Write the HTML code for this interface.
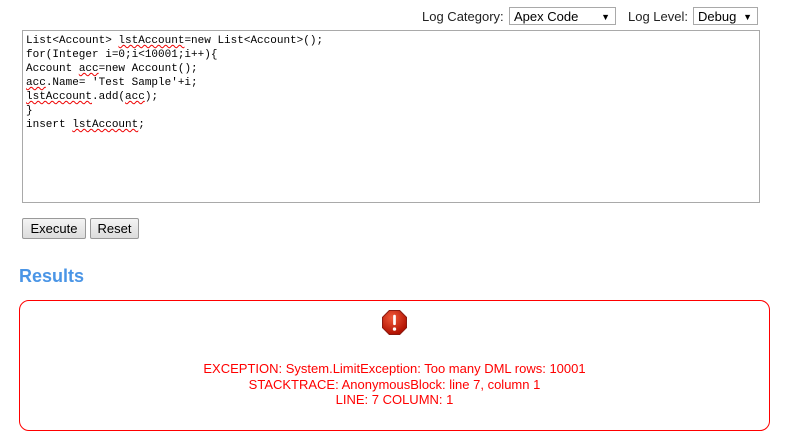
<!DOCTYPE html>
<html><head><style>
body{margin:0;width:795px;height:438px;background:#fff;font-family:"Liberation Sans",sans-serif;position:relative;overflow:hidden}
.a{position:absolute}
.lbl{font-size:13px;color:#222}
.sel{border:1px solid #a9a9a9;background:#fff;font-size:13px;height:18px;line-height:18px;padding-left:4px;box-sizing:border-box;color:#000}
.sel span{position:absolute;right:5px;top:0;font-size:9px}
.ta{left:22px;top:30px;width:738px;height:173px;border:1px solid #a9a9a9;box-sizing:border-box;font-family:"Liberation Mono",monospace;font-size:11px;line-height:14px;padding:3px 0 0 3px;white-space:pre;color:#000}
.u{text-decoration:underline wavy #e00;text-decoration-thickness:1px}
.btn{border:1px solid #999;border-radius:2px;background:linear-gradient(#f4f4f4,#dcdcdc);font-size:13px;height:21px;line-height:19px;box-sizing:border-box;text-align:center;color:#000}
.box{left:19px;top:300px;width:751px;height:131px;border:1px solid #f00;border-radius:10px;box-sizing:border-box}
.err{left:19px;width:751px;top:361px;text-align:center;color:#f00;font-size:13px;line-height:15.5px}
</style></head><body>
<div class="a lbl" style="left:422px;top:9px">Log Category:</div>
<div class="a sel" style="left:509px;top:7px;width:107px">Apex Code<span>▼</span></div>
<div class="a lbl" style="left:628px;top:9px">Log Level:</div>
<div class="a sel" style="left:693px;top:7px;width:65px">Debug<span>▼</span></div>
<div class="a ta">List&lt;Account&gt; <span class="u">lstAccount</span>=new List&lt;Account&gt;();
for(Integer i=0;i&lt;10001;i++){
Account <span class="u">acc</span>=new Account();
<span class="u">acc</span>.Name= 'Test Sample'+i;
<span class="u">lstAccount</span>.add(<span class="u">acc</span>);
}
insert <span class="u">lstAccount</span>;</div>
<div class="a btn" style="left:22px;top:218px;width:64px">Execute</div>
<div class="a btn" style="left:90px;top:218px;width:49px">Reset</div>
<div class="a" style="left:19px;top:266px;font-size:18px;font-weight:bold;color:#4a95e6">Results</div>
<div class="a box"></div>
<svg class="a" style="left:382px;top:310px" width="25" height="25" viewBox="0 0 24 24"><defs><radialGradient id="g" cx="40%" cy="30%" r="70%"><stop offset="0" stop-color="#f05a3a"/><stop offset="1" stop-color="#b01000"/></radialGradient></defs><polygon points="7,0.5 17,0.5 23.5,7 23.5,17 17,23.5 7,23.5 0.5,17 0.5,7" fill="url(#g)" stroke="#8a1a10"/><rect x="10.7" y="4.5" width="2.6" height="10" rx="1.2" fill="#fff"/><circle cx="12" cy="18.3" r="1.6" fill="#fff"/></svg>
<div class="a err">EXCEPTION: System.LimitException: Too many DML rows: 10001<br>STACKTRACE: AnonymousBlock: line 7, column 1<br>LINE: 7 COLUMN: 1</div>
</body></html>
